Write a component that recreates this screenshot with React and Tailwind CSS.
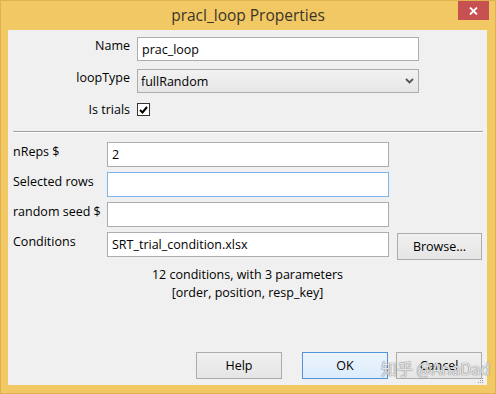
import React from "react";

const Field = ({ label, value = "", focused = false, children }) => (
  <div className="flex items-start">
    <span className="w-[94px] pt-[1px]">{label}</span>
    <input
      readOnly
      defaultValue={value}
      className={
        focused
          ? "w-[282px] h-[25px] border border-[#7EB4EA] bg-white px-[4px] outline-none"
          : "w-[282px] h-[25px] border border-[#ABADB3] bg-white px-[4px] outline-none"
      }
    />
    {children}
  </div>
);

const Btn = ({ children, primary = false, className = "" }) => (
  <button
    className={
      (primary
        ? "border-[#5294DB] bg-linear-to-b from-[#ECF4FC] to-[#DCECFC] "
        : "border-[#ACACAC] bg-linear-to-b from-[#F0F0F0] to-[#E5E5E5] ") +
      "h-[27px] border text-center " +
      className
    }
  >
    {children}
  </button>
);

export default function App() {
  return (
    <div className="relative w-[496px] h-[394px] bg-[#F1C864] border border-[#DDB24F] flex flex-col font-['Open_Sans','Noto_Sans',sans-serif] text-[12.5px] leading-[17px] text-black">
      {/* title bar */}
      <div className="relative h-[29px] flex items-center justify-center">
        <span className="text-[15.5px] leading-[21px] text-[#3b3528]">pracl_loop Properties</span>
        <button className="absolute right-[6px] top-0 w-[31px] h-[19px] bg-[#C75050] flex items-center justify-center">
          <svg width="9" height="8" viewBox="0 0 9 8">
            <path d="M1 0.5 L8 7.5 M8 0.5 L1 7.5" stroke="#fff" strokeWidth="1.8" />
          </svg>
        </button>
      </div>

      {/* client area */}
      <div className="ml-[7px] w-[479px] h-[355px] bg-[#F0F0F0] flex flex-col">
        <div className="pt-[7px] grid grid-cols-[122px_282px] gap-x-[7px] gap-y-[8px] items-start">
          <span className="text-right">Name</span>
          <input
            readOnly
            defaultValue="prac_loop"
            className="h-[24px] w-[282px] border border-[#ABADB3] bg-white px-[4px] outline-none"
          />
          <span className="text-right">loopType</span>
          <div className="h-[24px] w-[282px] border border-[#ACACAC] bg-linear-to-b from-[#F2F2F2] to-[#E6E6E6] flex items-center justify-between pl-[3px] pr-[4px]">
            <span>fullRandom</span>
            <svg width="9" height="6" viewBox="0 0 9 6">
              <polyline points="1,1 4.5,4.5 8,1" fill="none" stroke="#555" strokeWidth="1.8" />
            </svg>
          </div>
          <span className="text-right">Is trials</span>
          <div className="mt-[2px] w-[13px] h-[13px] border border-[#333] bg-white flex items-center justify-center">
            <svg width="9" height="8" viewBox="0 0 9 8">
              <polyline points="1,4 3.5,6.5 8,1" fill="none" stroke="#000" strokeWidth="2" />
            </svg>
          </div>
        </div>

        <div className="mt-[13px] ml-[5px] mr-[4px] border-t border-t-[#A0A0A0] border-b border-b-white" />

        <div className="mt-[9px] pl-[5px] flex flex-col gap-[5px]">
          <Field label="nReps $" value="2" />
          <Field label="Selected rows" focused />
          <Field label="random seed $" />
          <Field label="Conditions" value="SRT_trial_condition.xlsx">
            <Btn className="ml-[8px] mt-[1px] w-[85px]">Browse...</Btn>
          </Field>
        </div>

        <div className="mt-[6px] text-center leading-[18px]">
          <div>12 conditions, with 3 parameters</div>
          <div>[order, position, resp_key]</div>
        </div>

        <div className="mt-auto mb-[6px] pr-[5px] flex justify-end">
          <Btn className="w-[86px]">Help</Btn>
          <Btn primary className="ml-[20px] w-[86px]">OK</Btn>
          <Btn className="ml-[8px] w-[86px]">Cancel</Btn>
        </div>
      </div>

      {/* resize grip */}
      <svg className="absolute left-[476px] top-[376px]" width="8" height="8" viewBox="0 0 8 8">
        <rect x="5" y="1" width="1" height="1" fill="#999" />
        <rect x="3" y="3" width="1" height="1" fill="#999" />
        <rect x="5" y="3" width="1" height="1" fill="#999" />
        <rect x="1" y="5" width="1" height="1" fill="#999" />
        <rect x="3" y="5" width="1" height="1" fill="#999" />
        <rect x="5" y="5" width="1" height="1" fill="#999" />
      </svg>

      {/* watermark */}
      <span className="absolute left-[380px] top-[356px] whitespace-nowrap text-[16px] leading-[22px] font-['Noto_Sans_CJK_SC',sans-serif] text-white/80 [text-shadow:0_0_1px_#777,0_0_1px_#777]">
        知乎 @AnaDad
      </span>
    </div>
  );
}
